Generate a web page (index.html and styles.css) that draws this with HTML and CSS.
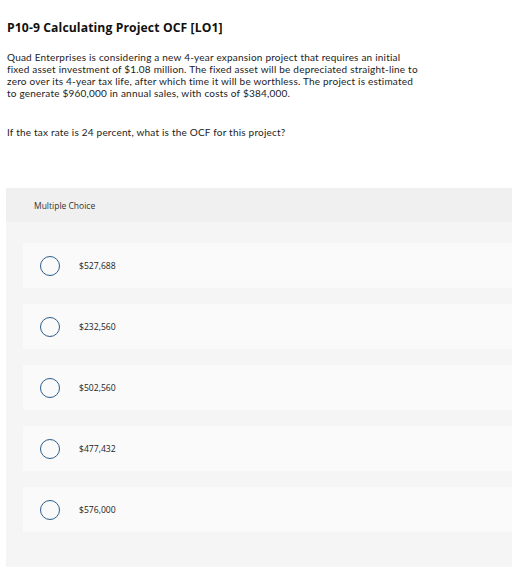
FILE: index.html
```html
<!DOCTYPE html>
<html>
<head>
<meta charset="utf-8">
<link rel="stylesheet" href="styles.css">
</head>
<body>
<div class="page">
  <h1 class="title">P10-9 Calculating Project OCF [LO1]</h1>
  <p class="para">Quad Enterprises is considering a new 4-year expansion project that requires an initial<br>fixed asset investment of $1.08 million. The fixed asset will be depreciated straight-line to<br>zero over its 4-year tax life, after which time it will be worthless. The project is estimated<br>to generate $960,000 in annual sales, with costs of $384,000.</p>
  <p class="para q">If the tax rate is 24 percent, what is the OCF for this project?</p>
  <div class="panel">
    <div class="panel-head">Multiple Choice</div>
    <div class="options">
      <div class="opt"><span class="radio"></span><span class="label">$527,688</span></div>
      <div class="opt"><span class="radio"></span><span class="label">$232,560</span></div>
      <div class="opt"><span class="radio"></span><span class="label">$502,560</span></div>
      <div class="opt"><span class="radio"></span><span class="label">$477,432</span></div>
      <div class="opt"><span class="radio"></span><span class="label">$576,000</span></div>
    </div>
  </div>
</div>
</body>
</html>
```
FILE: styles.css
```css
html, body { margin: 0; padding: 0; background: #fff; }
body { font-family: "Open Sans", "Liberation Sans", sans-serif; color: #222; }
.page { padding: 21px 0 0 6px; }
.title { margin: 0 0 0 1px; font-size: 12.2px; font-weight: 700; line-height: 14px; color: #111; letter-spacing: 0.1px; }
.para { margin: 16px 0 0 1px; font-family: "Lato", "Open Sans", sans-serif; font-size: 10px; line-height: 12px; letter-spacing: 0.21px; color: #222; }
.para.q { margin-top: 27px; }
.panel { margin-top: 50px; background: #f5f5f5; padding-bottom: 35px; }
.panel-head { background: #f0f0f0; height: 34px; display: flex; align-items: center; padding-left: 28px; font-size: 8.5px; color: #333; }
.options { padding: 21px 0 0 17px; display: flex; flex-direction: column; gap: 16px; }
.opt { height: 45px; background: #fafafa; display: flex; align-items: center; }
.radio { box-sizing: border-box; width: 20px; height: 20px; border: 1.5px solid #2d5d8c; border-radius: 50%; margin-left: 17px; flex: none; }
.label { margin-left: 19px; font-size: 8.6px; color: #222; }
```
